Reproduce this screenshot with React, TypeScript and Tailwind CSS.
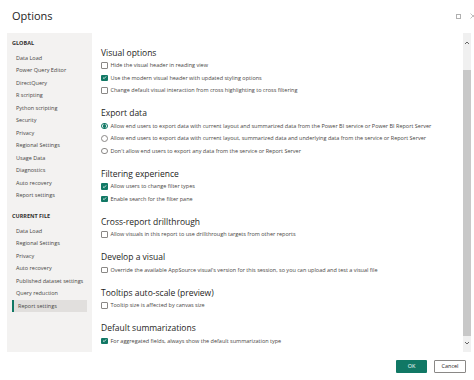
import React from "react";

const globalItems = [
  "Data Load",
  "Power Query Editor",
  "DirectQuery",
  "R scripting",
  "Python scripting",
  "Security",
  "Privacy",
  "Regional Settings",
  "Usage Data",
  "Diagnostics",
  "Auto recovery",
  "Report settings",
];

const fileItems = [
  "Data Load",
  "Regional Settings",
  "Privacy",
  "Auto recovery",
  "Published dataset settings",
  "Query reduction",
  "Report settings",
];

type Opt = { label: string; checked: boolean };
type Section = { title: string; kind: "check" | "radio"; options: Opt[] };

const sections: Section[] = [
  {
    title: "Visual options",
    kind: "check",
    options: [
      { label: "Hide the visual header in reading view", checked: false },
      { label: "Use the modern visual header with updated styling options", checked: true },
      { label: "Change default visual interaction from cross highlighting to cross filtering", checked: false },
    ],
  },
  {
    title: "Export data",
    kind: "radio",
    options: [
      { label: "Allow end users to export data with current layout and summarized data from the Power BI service or Power BI Report Server", checked: true },
      { label: "Allow end users to export data with current layout, summarized data and underlying data from the service or Report Server", checked: false },
      { label: "Don't allow end users to export any data from the service or Report Server", checked: false },
    ],
  },
  {
    title: "Filtering experience",
    kind: "check",
    options: [
      { label: "Allow users to change filter types", checked: true },
      { label: "Enable search for the filter pane", checked: true },
    ],
  },
  {
    title: "Cross-report drillthrough",
    kind: "check",
    options: [{ label: "Allow visuals in this report to use drillthrough targets from other reports", checked: false }],
  },
  {
    title: "Develop a visual",
    kind: "check",
    options: [
      { label: "Override the available AppSource visual's version for this session, so you can upload and test a visual file", checked: false },
    ],
  },
  {
    title: "Tooltips auto-scale (preview)",
    kind: "check",
    options: [{ label: "Tooltip size is affected by canvas size", checked: false }],
  },
  {
    title: "Default summarizations",
    kind: "check",
    options: [{ label: "For aggregated fields, always show the default summarization type", checked: true }],
  },
];

function CheckBox({ checked }: { checked: boolean }) {
  if (checked) {
    return (
      <span className="w-[6.5px] h-[6.5px] rounded-[1px] bg-[#117865] flex items-center justify-center shrink-0">
        <svg viewBox="0 0 10 10" className="w-[5px] h-[5px]">
          <path d="M2 5.2 L4.2 7.3 L8.2 2.8" fill="none" stroke="white" strokeWidth="1.6" />
        </svg>
      </span>
    );
  }
  return <span className="w-[6.5px] h-[6.5px] rounded-[1px] border border-[#8a8886] bg-white shrink-0" />;
}

function Radio({ checked }: { checked: boolean }) {
  return (
    <span
      className={`w-[6.5px] h-[6.5px] rounded-full border shrink-0 flex items-center justify-center ${
        checked ? "border-[#117865]" : "border-[#8a8886]"
      }`}
    >
      {checked && <span className="w-[3.5px] h-[3.5px] rounded-full bg-[#117865]" />}
    </span>
  );
}

function NavItem({ label, selected }: { label: string; selected?: boolean }) {
  return (
    <div
      className={`mx-[5px] h-[12.5px] flex items-center pl-[4px] text-[5.5px] text-[#484644] whitespace-nowrap ${
        selected ? "bg-[#e1dfdd] border-l-2 border-[#117865] pl-[2px]" : ""
      }`}
    >
      {label}
    </div>
  );
}

function App() {
  return (
    <div
      className="w-[474px] h-[380px] bg-white overflow-hidden flex flex-col text-[#252423]"
      style={{ fontFamily: '"Open Sans", "Noto Sans", sans-serif' }}
    >
      {/* title bar */}
      <div className="h-[33px] flex items-center justify-between shrink-0">
        <div className="pl-[12px] pb-[1px] text-[11px] text-[#252423]">Options</div>
        <div className="flex items-center gap-[9px] self-start mt-[13px] mr-[-2px]">
          <span className="w-[5px] h-[5px] border border-[#b0b0b0]" />
          <svg viewBox="0 0 6 6" className="w-[6px] h-[6px]">
            <path d="M0.5 0.5 L5.5 5.5 M5.5 0.5 L0.5 5.5" stroke="#b0b0b0" strokeWidth="0.8" />
          </svg>
        </div>
      </div>

      {/* body */}
      <div className="flex h-[319px] shrink-0">
        <div className="ml-[7px] w-[85px] bg-[#f3f2f1] shrink-0 pt-[4px]">
          <div className="h-[12px] flex items-center pl-[5px] text-[5.5px] font-bold text-[#323130]">GLOBAL</div>
          <div className="mt-[2.75px]">
            {globalItems.map((g) => (
              <NavItem key={g} label={g} />
            ))}
          </div>
          <div className="mt-[8.25px] h-[12px] flex items-center pl-[5px] text-[5.5px] font-bold text-[#323130]">
            CURRENT FILE
          </div>
          <div className="mt-[2.75px]">
            {fileItems.map((g, i) => (
              <NavItem key={g + i} label={g} selected={i === fileItems.length - 1} />
            ))}
          </div>
        </div>

        <div className="flex-1 pl-[9px] pt-[14px] flex flex-col gap-[11px] overflow-hidden">
          {sections.map((s) => (
            <div key={s.title}>
              <div className="h-[12px] flex items-center text-[8.5px] text-[#252423] whitespace-nowrap">{s.title}</div>
              {s.options.map((o) => (
                <div key={o.label} className="h-[12.5px] flex items-center gap-[3px]">
                  {s.kind === "check" ? <CheckBox checked={o.checked} /> : <Radio checked={o.checked} />}
                  <span className="text-[5.5px] text-[#484644] whitespace-nowrap">{o.label}</span>
                </div>
              ))}
            </div>
          ))}
        </div>

        {/* scrollbar */}
        <div className="w-[8px] mr-[3px] bg-[#f0f0f0] shrink-0 flex flex-col items-center">
          <svg viewBox="0 0 8 8" className="w-[8px] h-[8px] mt-[6px]">
            <path d="M2 5 L4 3 L6 5" fill="none" stroke="#555" strokeWidth="0.9" />
          </svg>
          <div className="w-[8px] bg-[#c8c8c8] mt-[23px] h-[266px]" />
          <svg viewBox="0 0 8 8" className="w-[8px] h-[8px] mt-[3px]">
            <path d="M2 3 L4 5 L6 3" fill="none" stroke="#555" strokeWidth="0.9" />
          </svg>
        </div>
      </div>

      {/* footer */}
      <div className="flex justify-end gap-[7px] mt-[8px] mr-[8px]">
        <button className="w-[31px] h-[13px] bg-[#117865] text-white text-[5.5px] rounded-[1px] flex items-center justify-center">
          OK
        </button>
        <button className="w-[32px] h-[13px] bg-white border border-[#8a8886] text-[#252423] text-[5.5px] rounded-[1px] flex items-center justify-center">
          Cancel
        </button>
      </div>
    </div>
  );
}

export default App;
